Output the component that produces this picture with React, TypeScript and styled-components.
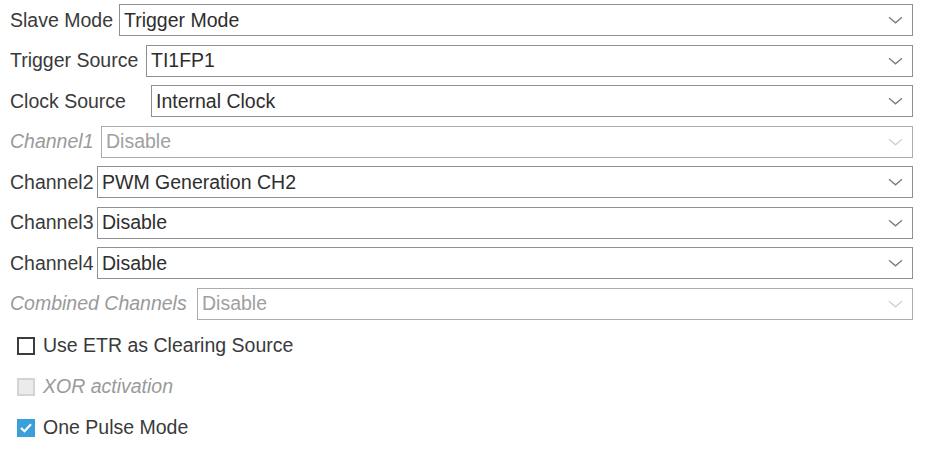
import React from 'react'
import styled, { createGlobalStyle } from 'styled-components'

const GlobalStyle = createGlobalStyle`
  html, body {
    margin: 0;
    padding: 0;
    background: #ffffff;
  }
  body {
    font-family: 'Liberation Sans', Arial, sans-serif;
    color: #333333;
  }
`

const Panel = styled.div`
  width: 930px;
  height: 462px;
  box-sizing: border-box;
  padding: 4px 17px 0 10px;
  display: flex;
  flex-direction: column;
  gap: 8.5px;
  font-size: 19.5px;
`

const Row = styled.div`
  display: flex;
  align-items: center;
  height: 32px;
`

const Label = styled.div<{ $disabled?: boolean; $width: number }>`
  flex: none;
  width: ${p => p.$width}px;
  white-space: nowrap;
  color: ${p => (p.$disabled ? '#9a9a9a' : '#3a3a3a')};
  font-style: ${p => (p.$disabled ? 'italic' : 'normal')};
`

const Select = styled.div<{ $disabled?: boolean }>`
  flex: 1;
  position: relative;
  height: 32px;
  box-sizing: border-box;
  border: 1px solid ${p => (p.$disabled ? '#a8acb0' : '#8c9196')};
  background: #ffffff;
  display: flex;
  align-items: center;
  padding: 0 9px 0 4px;
  color: ${p => (p.$disabled ? '#a0a0a0' : '#2e2e2e')};
`

const Value = styled.span`
  flex: 1;
  white-space: nowrap;
`

const Chevron = styled.svg<{ $disabled?: boolean }>`
  flex: none;
  width: 15px;
  height: 8px;
  stroke: ${p => (p.$disabled ? '#d0d0d0' : '#7a7a7a')};
`

const CheckList = styled.div`
  display: flex;
  flex-direction: column;
  margin-top: -3px;
`

const CheckRow = styled.label<{ $disabled?: boolean }>`
  display: flex;
  align-items: center;
  height: 41px;
  padding-left: 7px;
  gap: 8px;
  color: ${p => (p.$disabled ? '#9a9a9a' : '#3a3a3a')};
  font-style: ${p => (p.$disabled ? 'italic' : 'normal')};
`

const Box = styled.span<{ $checked?: boolean; $disabled?: boolean }>`
  flex: none;
  width: 18px;
  height: 18px;
  box-sizing: border-box;
  display: flex;
  align-items: center;
  justify-content: center;
  border: 2px solid
    ${p => (p.$checked ? '#3a9fdb' : p.$disabled ? '#d4d4d4' : '#3c3c3c')};
  background: ${p => (p.$checked ? '#3a9fdb' : p.$disabled ? '#ebebeb' : '#ffffff')};
`

type Field = {
  label: string
  value: string
  labelWidth: number
  disabled?: boolean
}

const fields: Field[] = [
  { label: 'Slave Mode', value: 'Trigger Mode', labelWidth: 109 },
  { label: 'Trigger Source', value: 'TI1FP1', labelWidth: 136 },
  { label: 'Clock Source', value: 'Internal Clock', labelWidth: 141 },
  { label: 'Channel1', value: 'Disable', labelWidth: 91, disabled: true },
  { label: 'Channel2', value: 'PWM Generation CH2', labelWidth: 87 },
  { label: 'Channel3', value: 'Disable', labelWidth: 87 },
  { label: 'Channel4', value: 'Disable', labelWidth: 87 },
  { label: 'Combined Channels', value: 'Disable', labelWidth: 187, disabled: true }
]

const checks = [
  { label: 'Use ETR as Clearing Source', checked: false, disabled: false },
  { label: 'XOR activation', checked: false, disabled: true },
  { label: 'One Pulse Mode', checked: true, disabled: false }
]

function DropDown ({ value, disabled }: { value: string; disabled?: boolean }) {
  return (
    <Select $disabled={disabled}>
      <Value>{value}</Value>
      <Chevron $disabled={disabled} viewBox='0 0 15 8' fill='none' strokeWidth='1.3'>
        <path d='M1 1.2 L7.5 6.8 L14 1.2' />
      </Chevron>
    </Select>
  )
}

export default function App () {
  return (
    <>
      <GlobalStyle />
      <Panel>
        {fields.map(f => (
          <Row key={f.label}>
            <Label $disabled={f.disabled} $width={f.labelWidth}>{f.label}</Label>
            <DropDown value={f.value} disabled={f.disabled} />
          </Row>
        ))}
        <CheckList>
          {checks.map(c => (
            <CheckRow key={c.label} $disabled={c.disabled}>
              <Box $checked={c.checked} $disabled={c.disabled}>
                {c.checked && (
                  <svg width='12' height='10' viewBox='0 0 12 10' fill='none'>
                    <path d='M1 5 L4.5 8.3 L11 1.2' stroke='#ffffff' strokeWidth='2.2' />
                  </svg>
                )}
              </Box>
              {c.label}
            </CheckRow>
          ))}
        </CheckList>
      </Panel>
    </>
  )
}
